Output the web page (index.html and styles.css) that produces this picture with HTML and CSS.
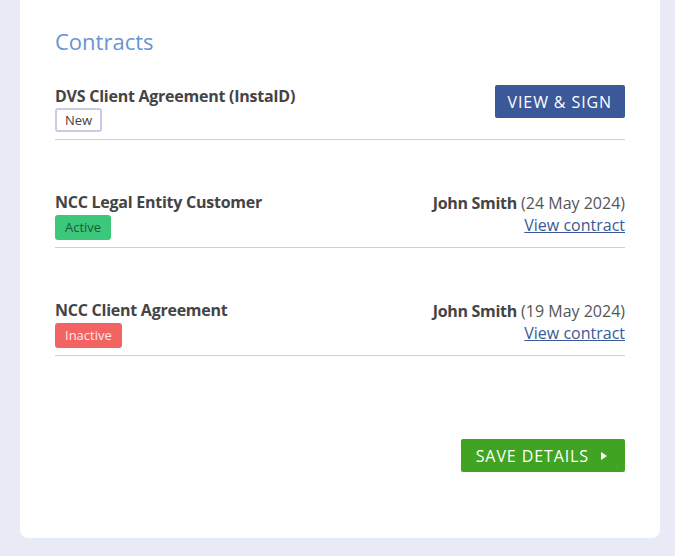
FILE: index.html
```html
<!DOCTYPE html>
<html lang="en">
<head>
<meta charset="utf-8">
<title>Contracts</title>
<link rel="stylesheet" href="styles.css">
</head>
<body>
<div class="card">
  <h2 class="title">Contracts</h2>
  <div class="row row-first">
    <div class="info">
      <div class="name">DVS Client Agreement (InstaID)</div>
      <span class="badge badge-new">New</span>
    </div>
    <a class="btn btn-blue" href="#">VIEW &amp; SIGN</a>
  </div>
  <div class="row">
    <div class="info">
      <div class="name">NCC Legal Entity Customer</div>
      <span class="badge badge-active">Active</span>
    </div>
    <div class="meta">
      <div><strong>John Smith</strong> (24 May 2024)</div>
      <a class="link" href="#">View contract</a>
    </div>
  </div>
  <div class="row">
    <div class="info">
      <div class="name">NCC Client Agreement</div>
      <span class="badge badge-inactive">Inactive</span>
    </div>
    <div class="meta">
      <div><strong>John Smith</strong> (19 May 2024)</div>
      <a class="link" href="#">View contract</a>
    </div>
  </div>
  <div class="actions">
    <a class="btn btn-green" href="#">SAVE DETAILS <span class="arrow"></span></a>
  </div>
</div>
</body>
</html>
```
FILE: styles.css
```css
html, body {
  margin: 0;
  padding: 0;
}
body {
  background: #e8ebf6;
  font-family: "Open Sans", "Liberation Sans", sans-serif;
  color: #444;
  height: 556px;
}
.card {
  background: #fff;
  margin: 0 15px 0 20px;
  height: 538px;
  box-sizing: border-box;
  border-radius: 0 0 8px 8px;
  padding: 27px 35px 0 35px;
}
.title {
  margin: 0;
  font-size: 22px;
  line-height: 28px;
  font-weight: 400;
  color: #6a93d4;
}
.row {
  display: flex;
  justify-content: space-between;
  align-items: flex-start;
  border-bottom: 1px solid #cfcfcf;
  padding-bottom: 7px;
  margin-top: 52px;
}
.row-first {
  margin-top: 31px;
}
.name {
  font-weight: 700;
  font-size: 16px;
  line-height: 20px;
  letter-spacing: -0.25px;
  color: #444;
  margin-bottom: 3px;
}
.badge {
  display: inline-block;
  font-size: 13px;
  line-height: 25px;
  height: 25px;
  padding: 0 10px;
  border-radius: 3px;
  box-sizing: border-box;
}
.badge-new {
  border: 2px solid #c9cde3;
  line-height: 20px;
  height: 24px;
  padding: 0 8px;
  color: #444;
}
.row-first .name {
  margin-bottom: 2px;
}
.badge-active {
  background: #3cc77a;
  color: #1f5a3a;
}
.badge-inactive {
  background: #f26464;
  color: #fde8e8;
}
.btn {
  display: inline-flex;
  align-items: center;
  height: 33px;
  color: #fff;
  text-decoration: none;
  font-size: 16px;
  letter-spacing: 0.9px;
  border-radius: 2px;
  box-sizing: border-box;
}
.btn-blue {
  background: #3b5998;
  padding: 0 13px;
  margin-top: -1px;
}
.btn-green {
  background: #41a322;
  padding: 0 18px 0 15px;
}
.arrow {
  display: inline-block;
  width: 0;
  height: 0;
  border-top: 4px solid transparent;
  border-bottom: 4px solid transparent;
  border-left: 6px solid #fff;
  margin-left: 12px;
}
.meta {
  text-align: right;
  font-size: 16px;
  line-height: 22px;
  color: #555;
}
.meta strong {
  color: #444;
  letter-spacing: -0.3px;
}
.link {
  color: #3b5998;
  text-decoration: underline;
}
.actions {
  display: flex;
  justify-content: flex-end;
  margin-top: 83px;
}
```
